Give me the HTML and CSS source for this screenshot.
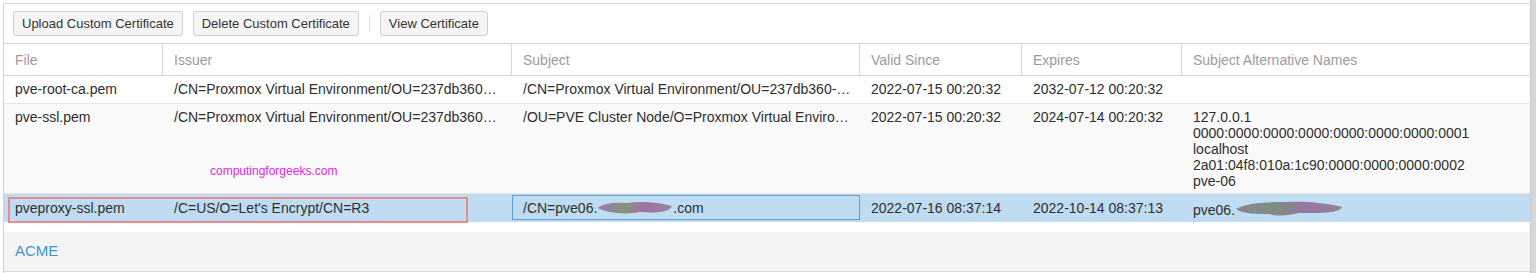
FILE: index.html
```html
<!DOCTYPE html>
<html>
<head>
<meta charset="utf-8">
<link rel="stylesheet" href="styles.css">
</head>
<body>
<div class="wrap">
  <div class="panel">
    <div class="toolbar">
      <button class="btn">Upload Custom Certificate</button>
      <button class="btn">Delete Custom Certificate</button>
      <span class="sep"></span>
      <button class="btn">View Certificate</button>
    </div>
    <div class="row head">
      <div class="cell">File</div>
      <div class="cell">Issuer</div>
      <div class="cell">Subject</div>
      <div class="cell">Valid Since</div>
      <div class="cell">Expires</div>
      <div class="cell">Subject Alternative Names</div>
    </div>
    <div class="grid-body">
      <div class="row">
        <div class="cell">pve-root-ca.pem</div>
        <div class="cell">/CN=Proxmox Virtual Environment/OU=237db360…</div>
        <div class="cell">/CN=Proxmox Virtual Environment/OU=237db360-…</div>
        <div class="cell">2022-07-15 00:20:32</div>
        <div class="cell">2032-07-12 00:20:32</div>
        <div class="cell"></div>
      </div>
      <div class="row alt">
        <div class="cell">pve-ssl.pem</div>
        <div class="cell">/CN=Proxmox Virtual Environment/OU=237db360…</div>
        <div class="cell">/OU=PVE Cluster Node/O=Proxmox Virtual Enviro…</div>
        <div class="cell">2022-07-15 00:20:32</div>
        <div class="cell">2024-07-14 00:20:32</div>
        <div class="cell multi">127.0.0.1<br>0000:0000:0000:0000:0000:0000:0000:0001<br>localhost<br>2a01:04f8:010a:1c90:0000:0000:0000:0002<br>pve-06</div>
      </div>
      <div class="row selected">
        <div class="cell">pveproxy-ssl.pem</div>
        <div class="cell">/C=US/O=Let's Encrypt/CN=R3</div>
        <div class="cell focus"><span class="focus-box">/CN=pve06.<svg class="blur" width="76" height="16" viewBox="0 0 76 16"><defs><linearGradient id="g1" x1="0" x2="1"><stop offset="0" stop-color="#9a78aa"/><stop offset="0.35" stop-color="#86907f"/><stop offset="0.65" stop-color="#a270a8"/><stop offset="1" stop-color="#8f8a9a"/></linearGradient><filter id="f1"><feGaussianBlur stdDeviation="0.6"/></filter></defs><path d="M1 8 C6 3 18 2 30 3 C44 1 60 2 75 6 C72 13 56 13 42 12 C28 15 10 13 1 8 Z" fill="url(#g1)" filter="url(#f1)"/></svg>.com</span></div>
        <div class="cell">2022-07-16 08:37:14</div>
        <div class="cell">2022-10-14 08:37:13</div>
        <div class="cell">pve06.<svg class="blur" width="108" height="18" viewBox="0 0 108 18"><defs><linearGradient id="g2" x1="0" x2="1"><stop offset="0" stop-color="#8c8794"/><stop offset="0.35" stop-color="#7d8e7e"/><stop offset="0.7" stop-color="#9a74a2"/><stop offset="1" stop-color="#88888e"/></linearGradient><filter id="f2"><feGaussianBlur stdDeviation="0.6"/></filter></defs><path d="M1 9 C10 3 30 2 50 2 C70 1 92 3 107 7 C104 14 82 13 64 13 C54 15 44 17 34 14 C22 14 8 14 1 9 Z" fill="url(#g2)" filter="url(#f2)"/></svg></div>
      </div>
      <div class="mark"></div>
      <div class="watermark">computingforgeeks.com</div>
    </div>
    <div class="footer"><span class="acme">ACME</span></div>
  </div>
  <div class="vbar"></div>
</div>
</body>
</html>
```

FILE: styles.css
```css
* { box-sizing: border-box; }
html, body { margin: 0; padding: 0; background: #fff; }
body {
  font-family: "Liberation Sans", Arial, Helvetica, sans-serif;
  color: #2e2e2e;
  width: 1536px;
  height: 273px;
  overflow: hidden;
}
.wrap {
  display: flex;
  height: 273px;
}
.panel {
  flex: 1;
  margin: 3px 0 0 3px;
  border-left: 1px solid #d2d2d2;
  border-top: 1px solid #d6d6d6;
  display: flex;
  flex-direction: column;
}
.vbar {
  width: 6px;
  background: #d7d7d7;
  border-left: 1px solid #c9c9c9;
}
.toolbar {
  height: 40px;
  padding: 7px 9px;
  display: flex;
  align-items: flex-start;
  border-bottom: 1px solid #d4d4d4;
}
.btn {
  height: 25px;
  padding: 0 8px;
  margin-right: 10px;
  font-family: "Liberation Sans", Arial, Helvetica, sans-serif;
  font-size: 13px;
  color: #333;
  background: #f5f5f5;
  border: 1px solid #cfcfcf;
  border-radius: 3px;
}
.sep {
  width: 1px;
  height: 17px;
  margin: 4px 10px 0 0;
  background: #e2e2e2;
}
.row {
  display: grid;
  grid-template-columns: 159px 349px 348px 162px 160px 1fr;
  border-bottom: 1px solid #e6e6e6;
  font-size: 14px;
  line-height: 16px;
}
.cell {
  padding: 5px 11px 6px 11px;
  white-space: nowrap;
  overflow: hidden;
}
.head {
  height: 32px;
  border-bottom: 1px solid #d4d4d4;
  color: #9c9c9c;
}
.head .cell {
  padding-top: 8px;
  border-right: 1px solid #d8d8d8;
}
.head .cell:last-child { border-right: 0; }
.grid-body {
  position: relative;
  height: 156px;
}
.alt { background: #fafafa; }
.multi { white-space: normal; line-height: 16px; padding-bottom: 4px; }
.selected { background: #c0dcf3; border-bottom: 0; height: 28px; }
.selected .cell { padding-top: 6px; padding-bottom: 0; }
.cell.focus {
  padding: 1px 0 2px 0;
}
.focus-box {
  display: block;
  height: 25px;
  padding: 4px 10px 0 10px;
  border: 1px solid #5d9dd8;
}
.blur {
  vertical-align: -3px;
}
.mark {
  position: absolute;
  left: 4px;
  top: 121px;
  width: 460px;
  height: 26px;
  border: 2px solid #ea8a90;
}
.watermark {
  position: absolute;
  left: 206px;
  top: 88px;
  font-size: 12px;
  color: #e61ee6;
}
.footer {
  height: 40px;
  background: #f4f4f4;
  border-bottom: 1px solid #dcdcdc;
  padding: 10px 11px;
}
.acme {
  font-size: 15px;
  color: #3c94d6;
}
```
